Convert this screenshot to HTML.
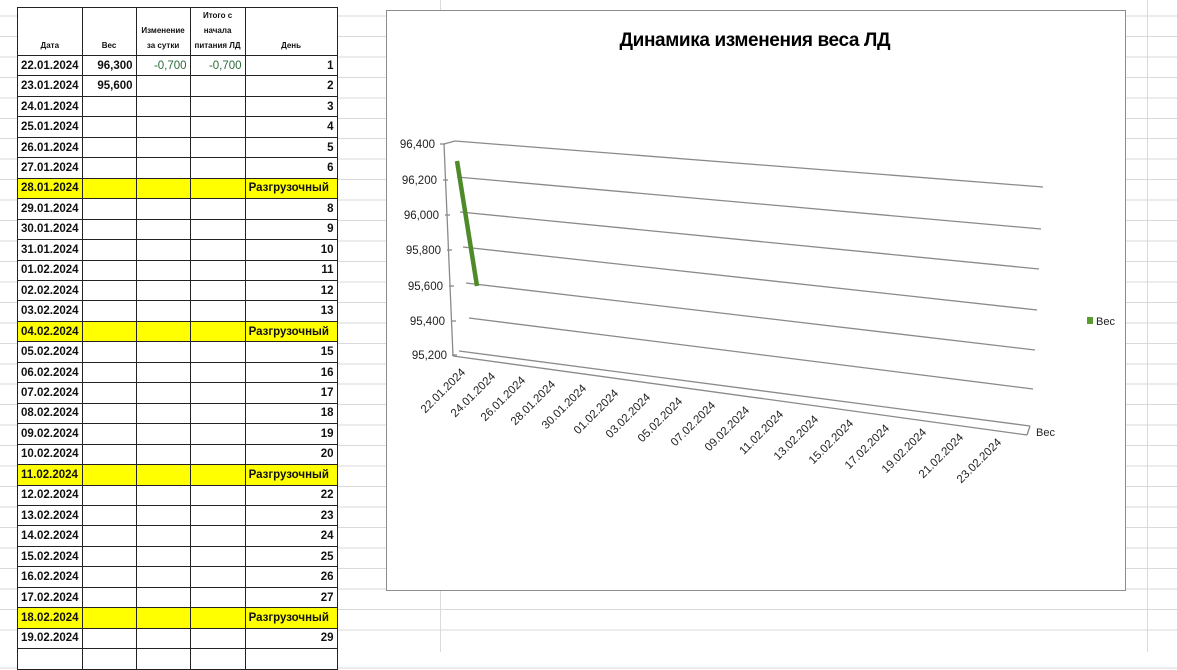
<!DOCTYPE html>
<html><head><meta charset="utf-8"><style>
html,body{margin:0;padding:0;width:1177px;height:652px;overflow:hidden;background:#fff;
background-image:repeating-linear-gradient(to bottom,transparent 0,transparent 19.46px,#dadada 19.46px,#dadada 20.46px);background-position:0 -4px;
font-family:"Liberation Sans",sans-serif;}
.vl{position:absolute;top:0;width:1px;height:652px;background:#dadada}
table{position:absolute;left:17px;top:7px;border-collapse:collapse;background:#fff;table-layout:fixed}
tr{height:20.46px}
td{border:1.5px solid #222;padding:0 3px;font-size:11.5px;font-weight:bold;line-height:16px;white-space:nowrap;overflow:hidden;color:#111;box-sizing:border-box}
tr.h{height:48px}
tr.h td{font-size:8px;text-align:center;vertical-align:bottom;line-height:15px;padding:0 1px 2px}
td.r{text-align:right}
td.g{color:#2b6b3b;font-weight:normal}
tr.y td{background:#ffff00}
#chart{position:absolute;left:386px;top:10px;width:738px;height:579px;border:1px solid #8c8c8c;background:#fff}
</style></head><body>
<div class="vl" style="left:1147px"></div>
<div class="vl" style="left:440px"></div>
<table>
<colgroup><col style="width:60px"><col style="width:54px"><col style="width:54px"><col style="width:55px"><col style="width:92px"></colgroup>
<tr class="h"><td>Дата</td><td>Вес</td><td>Изменение<br>за сутки</td><td>Итого с<br>начала<br>питания ЛД</td><td>День</td></tr>
<tr><td>22.01.2024</td><td class="r">96,300</td><td class="r g">-0,700</td><td class="r g">-0,700</td><td class="r">1</td></tr>
<tr><td>23.01.2024</td><td class="r">95,600</td><td></td><td></td><td class="r">2</td></tr>
<tr><td>24.01.2024</td><td></td><td></td><td></td><td class="r">3</td></tr>
<tr><td>25.01.2024</td><td></td><td></td><td></td><td class="r">4</td></tr>
<tr><td>26.01.2024</td><td></td><td></td><td></td><td class="r">5</td></tr>
<tr><td>27.01.2024</td><td></td><td></td><td></td><td class="r">6</td></tr>
<tr class="y"><td>28.01.2024</td><td></td><td></td><td></td><td>Разгрузочный</td></tr>
<tr><td>29.01.2024</td><td></td><td></td><td></td><td class="r">8</td></tr>
<tr><td>30.01.2024</td><td></td><td></td><td></td><td class="r">9</td></tr>
<tr><td>31.01.2024</td><td></td><td></td><td></td><td class="r">10</td></tr>
<tr><td>01.02.2024</td><td></td><td></td><td></td><td class="r">11</td></tr>
<tr><td>02.02.2024</td><td></td><td></td><td></td><td class="r">12</td></tr>
<tr><td>03.02.2024</td><td></td><td></td><td></td><td class="r">13</td></tr>
<tr class="y"><td>04.02.2024</td><td></td><td></td><td></td><td>Разгрузочный</td></tr>
<tr><td>05.02.2024</td><td></td><td></td><td></td><td class="r">15</td></tr>
<tr><td>06.02.2024</td><td></td><td></td><td></td><td class="r">16</td></tr>
<tr><td>07.02.2024</td><td></td><td></td><td></td><td class="r">17</td></tr>
<tr><td>08.02.2024</td><td></td><td></td><td></td><td class="r">18</td></tr>
<tr><td>09.02.2024</td><td></td><td></td><td></td><td class="r">19</td></tr>
<tr><td>10.02.2024</td><td></td><td></td><td></td><td class="r">20</td></tr>
<tr class="y"><td>11.02.2024</td><td></td><td></td><td></td><td>Разгрузочный</td></tr>
<tr><td>12.02.2024</td><td></td><td></td><td></td><td class="r">22</td></tr>
<tr><td>13.02.2024</td><td></td><td></td><td></td><td class="r">23</td></tr>
<tr><td>14.02.2024</td><td></td><td></td><td></td><td class="r">24</td></tr>
<tr><td>15.02.2024</td><td></td><td></td><td></td><td class="r">25</td></tr>
<tr><td>16.02.2024</td><td></td><td></td><td></td><td class="r">26</td></tr>
<tr><td>17.02.2024</td><td></td><td></td><td></td><td class="r">27</td></tr>
<tr class="y"><td>18.02.2024</td><td></td><td></td><td></td><td>Разгрузочный</td></tr>
<tr><td>19.02.2024</td><td></td><td></td><td></td><td class="r">29</td></tr>
<tr><td></td><td></td><td></td><td></td><td></td></tr>
</table>
<div id="chart"></div>
<svg style="position:absolute;left:0;top:0" width="1177" height="652" font-family="Liberation Sans, sans-serif">
<text x="755" y="46" font-size="19" font-weight="bold" text-anchor="middle" textLength="271" fill="#000">Динамика изменения веса ЛД</text>
<g stroke="#8a8a8a" stroke-width="1.3" fill="none">
<line x1="455" y1="141" x2="1043" y2="187"/>
<line x1="457" y1="177" x2="1041" y2="229"/>
<line x1="460" y1="212" x2="1039" y2="269"/>
<line x1="463" y1="247" x2="1037" y2="310"/>
<line x1="466" y1="283" x2="1035" y2="350"/>
<line x1="469" y1="318" x2="1033" y2="389"/>
<line x1="459" y1="351" x2="1030" y2="426"/>
<line x1="453" y1="356" x2="1027" y2="435"/>
<line x1="444" y1="144" x2="453" y2="356"/>
<line x1="444" y1="144" x2="455" y2="141"/>
<line x1="1030" y1="426" x2="1027" y2="435"/>
<line x1="440" y1="144" x2="445" y2="144"/><line x1="443" y1="180" x2="448" y2="180"/><line x1="445" y1="215" x2="450" y2="215"/><line x1="447" y1="250" x2="452" y2="250"/><line x1="449" y1="286" x2="454" y2="286"/><line x1="451" y1="321" x2="456" y2="321"/><line x1="452" y1="355" x2="457" y2="355"/>
</g>
<line x1="457" y1="161" x2="477" y2="286" stroke="#4f8a2a" stroke-width="4.5"/>
<g font-size="11.5" fill="#222" text-anchor="end">
<text x="435" y="148">96,400</text><text x="437" y="184">96,200</text><text x="439" y="219">96,000</text><text x="441" y="254">95,800</text><text x="443" y="290">95,600</text><text x="445" y="325">95,400</text><text x="447" y="359">95,200</text>
</g>
<g font-size="11.5" fill="#222" text-anchor="end">
<text x="466" y="373" transform="rotate(-45 466 373)">22.01.2024</text>
<text x="496" y="377" transform="rotate(-45 496 377)">24.01.2024</text>
<text x="526" y="381" transform="rotate(-45 526 381)">26.01.2024</text>
<text x="556" y="385" transform="rotate(-45 556 385)">28.01.2024</text>
<text x="587" y="389" transform="rotate(-45 587 389)">30.01.2024</text>
<text x="619" y="394" transform="rotate(-45 619 394)">01.02.2024</text>
<text x="651" y="398" transform="rotate(-45 651 398)">03.02.2024</text>
<text x="683" y="402" transform="rotate(-45 683 402)">05.02.2024</text>
<text x="716" y="406" transform="rotate(-45 716 406)">07.02.2024</text>
<text x="750" y="411" transform="rotate(-45 750 411)">09.02.2024</text>
<text x="784" y="415" transform="rotate(-45 784 415)">11.02.2024</text>
<text x="819" y="420" transform="rotate(-45 819 420)">13.02.2024</text>
<text x="854" y="424" transform="rotate(-45 854 424)">15.02.2024</text>
<text x="890" y="429" transform="rotate(-45 890 429)">17.02.2024</text>
<text x="927" y="433" transform="rotate(-45 927 433)">19.02.2024</text>
<text x="964" y="438" transform="rotate(-45 964 438)">21.02.2024</text>
<text x="1002" y="443" transform="rotate(-45 1002 443)">23.02.2024</text>
</g>
<text x="1036" y="436" font-size="11" fill="#222">Вес</text>
<rect x="1087" y="317" width="6" height="7" fill="#5b9b30"/>
<text x="1096" y="325" font-size="11" fill="#222">Вес</text>
</svg>
</body></html>
